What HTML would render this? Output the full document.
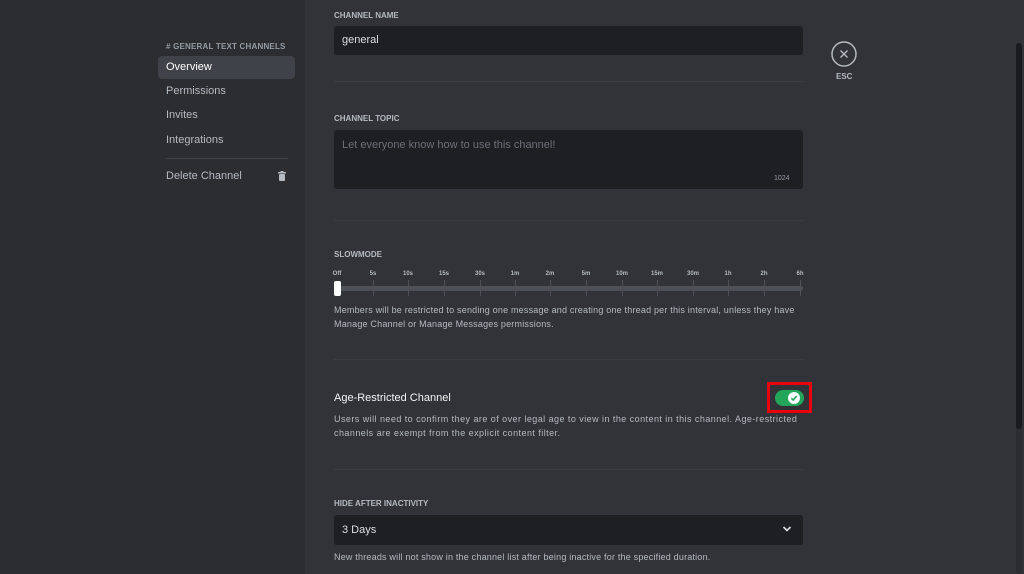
<!DOCTYPE html>
<html><head><style>
*{margin:0;padding:0;box-sizing:border-box}
body{width:1024px;height:574px;overflow:hidden;background:#313338;font-family:"Liberation Sans",sans-serif;position:relative;color:#dbdee1}
.side{position:absolute;left:0;top:0;width:305px;height:574px;background:#2b2d31}
.a{position:absolute}
.hdr{font-size:8px;font-weight:bold;color:#949ba4;letter-spacing:.2px}
.item{position:absolute;left:158px;width:137px;height:23px;font-size:11px;color:#b5bac1;padding:6px 8px;line-height:11px}
.lbl{position:absolute;left:334px;font-size:8px;font-weight:bold;color:#b5bac1}
.inp{position:absolute;left:334px;width:469px;background:#1e1f22;border-radius:3px;font-size:11px;color:#dbdee1;padding:0 8px}
.sep{position:absolute;left:334px;width:469px;height:1px;background:#3a3c42}
.desc{position:absolute;left:334px;width:520px;white-space:nowrap;font-size:9px;line-height:14px;color:#b5bac1}
.tk{position:absolute;top:271px;font-size:6px;font-weight:bold;color:#b5bac1;transform:translateX(-50%)}
.tl{position:absolute;top:280px;width:1px;height:16px;background:#4e5058}
</style></head><body>
<div class="side"></div>
<div class="a hdr" style="left:166px;top:42px">#&nbsp;GENERAL TEXT CHANNELS</div>
<div class="item" style="top:56px;background:#404249;border-radius:4px;color:#fff">Overview</div>
<div class="item" style="top:80px">Permissions</div>
<div class="item" style="top:104px">Invites</div>
<div class="item" style="top:129px">Integrations</div>
<div class="a" style="left:166px;top:158px;width:122px;height:1px;background:#3f4147"></div>
<div class="item" style="top:165px">Delete Channel</div>
<svg class="a" style="left:277px;top:171px" width="10" height="11" viewBox="0 0 10 11"><rect x="1" y="1" width="8" height="1.5" fill="#b5bac1"/><rect x="3.5" y="0" width="3" height="1.5" fill="#b5bac1"/><rect x="2" y="3" width="6" height="7" rx="1" fill="#b5bac1"/></svg>

<div class="lbl" style="top:11px">CHANNEL NAME</div>
<div class="inp" style="top:26px;height:29px;line-height:29px">general</div>
<div class="sep" style="top:81px"></div>
<div class="lbl" style="top:114px">CHANNEL TOPIC</div>
<div class="inp" style="top:130px;height:59px;padding-top:9px;color:#6d6f78">Let everyone know how to use this channel!</div>
<div class="a" style="left:774px;top:175px;font-size:7px;color:#949ba4">1024</div>
<div class="sep" style="top:220px"></div>
<div class="lbl" style="top:250px">SLOWMODE</div>
<div class="a" style="left:337px;top:286px;width:466px;height:5px;background:#4e5058;border-radius:3px"></div>
<div class="tk" style="left:337px">Off</div><div class="tk" style="left:373px">5s</div><div class="tk" style="left:408px">10s</div><div class="tk" style="left:444px">15s</div><div class="tk" style="left:480px">30s</div><div class="tk" style="left:515px">1m</div><div class="tk" style="left:550px">2m</div><div class="tk" style="left:586px">5m</div><div class="tk" style="left:622px">10m</div><div class="tk" style="left:657px">15m</div><div class="tk" style="left:693px">30m</div><div class="tk" style="left:728px">1h</div><div class="tk" style="left:764px">2h</div><div class="tk" style="left:800px">6h</div>
<div class="tl" style="left:373px"></div><div class="tl" style="left:408px"></div><div class="tl" style="left:444px"></div><div class="tl" style="left:480px"></div><div class="tl" style="left:515px"></div><div class="tl" style="left:550px"></div><div class="tl" style="left:586px"></div><div class="tl" style="left:622px"></div><div class="tl" style="left:657px"></div><div class="tl" style="left:693px"></div><div class="tl" style="left:728px"></div><div class="tl" style="left:764px"></div><div class="tl" style="left:800px"></div>
<div class="a" style="left:334px;top:281px;width:7px;height:15px;background:#fff;border-radius:2px"></div>
<div class="desc" style="top:303px;letter-spacing:.2px">Members will be restricted to sending one message and creating one thread per this interval, unless they have<br>Manage Channel or Manage Messages permissions.</div>
<div class="sep" style="top:359px"></div>
<div class="a" style="left:334px;top:392px;font-size:11px;color:#f2f3f5">Age-Restricted Channel</div>
<div class="desc" style="top:412px;letter-spacing:.45px">Users will need to confirm they are of over legal age to view in the content in this channel. Age-restricted<br>channels are exempt from the explicit content filter.</div>
<div class="a" style="left:767px;top:382px;width:45px;height:31px;border:3px solid #e8000b"></div>
<div class="a" style="left:775px;top:390px;width:29px;height:16px;background:#23a55a;border-radius:8px"></div>
<svg class="a" style="left:787px;top:391px" width="14" height="14" viewBox="0 0 14 14"><circle cx="7" cy="7" r="6" fill="#fff"/><path d="M4.3 7.2 L6.2 9 L9.7 5" stroke="#23a55a" stroke-width="1.6" fill="none"/></svg>
<div class="sep" style="top:469px"></div>
<div class="lbl" style="top:499px">HIDE AFTER INACTIVITY</div>
<div class="inp" style="top:515px;height:30px;line-height:30px">3 Days</div>
<svg class="a" style="left:782px;top:525px" width="10" height="8" viewBox="0 0 10 8"><path d="M1.5 2 L5 5.5 L8.5 2" stroke="#dbdee1" stroke-width="1.6" fill="none"/></svg>
<div class="desc" style="top:550px;letter-spacing:.2px">New threads will not show in the channel list after being inactive for the specified duration.</div>

<svg class="a" style="left:831px;top:41px" width="26" height="26" viewBox="0 0 26 26"><circle cx="13" cy="13" r="12" stroke="#b5bac1" stroke-width="1.5" fill="none"/><path d="M9.5 9.5 L16.5 16.5 M16.5 9.5 L9.5 16.5" stroke="#b5bac1" stroke-width="1.4"/></svg>
<div class="a" style="left:836px;top:72px;font-size:8px;font-weight:bold;color:#b5bac1">ESC</div>
<div class="a" style="left:1016px;top:43px;width:6px;height:531px;background:#2b2d31;border-radius:3px"></div>
<div class="a" style="left:1016px;top:43px;width:6px;height:386px;background:#1a1b1e;border-radius:3px"></div>
</body></html>
